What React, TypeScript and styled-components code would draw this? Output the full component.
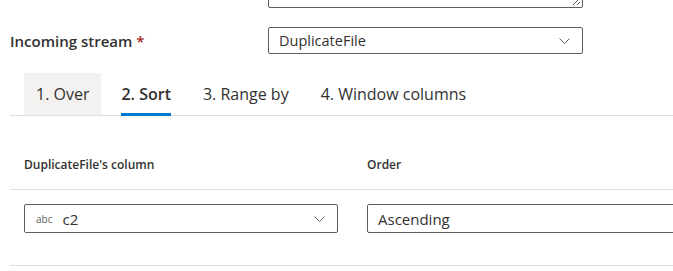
import React from "react";
import styled, { createGlobalStyle } from "styled-components";

const Global = createGlobalStyle`
  html, body { margin: 0; padding: 0; background: #ffffff; }
  body { font-family: "Segoe UI", "Open Sans", sans-serif; color: #323130; }
  * { box-sizing: border-box; }
`;

const Page = styled.div`
  width: 673px;
  height: 271px;
  overflow: hidden;
  padding-left: 10px;
`;

const TopArea = styled.div`
  margin-left: 258px;
  width: 315px;
  height: 40px;
  margin-top: -32px;
  border: 1px solid #605e5c;
  border-radius: 2px;
  position: relative;
`;

const Grip = styled.svg`
  position: absolute;
  right: 1px;
  bottom: 1px;
`;

const FieldRow = styled.div`
  display: flex;
  align-items: center;
  margin-top: 19px;
  height: 27px;
`;

const Label = styled.div`
  width: 258px;
  font-size: 15px;
  font-weight: 600;
  color: #323130;
`;

const Required = styled.span`
  color: #a4262c;
  margin-left: 4px;
`;

const Select = styled.div<{ $w: number }>`
  width: ${(p) => p.$w}px;
  height: 100%;
  border: 1px solid #605e5c;
  border-radius: 2px;
  display: flex;
  align-items: center;
  padding: 0 12px 0 10px;
  font-size: 14.5px;
  color: #323130;
`;

const SelectText = styled.span`
  flex: 1;
`;

const Chevron = () => (
  <svg width="11" height="6" viewBox="0 0 11 6">
    <path d="M0.5 0.5 L5.5 5.5 L10.5 0.5" fill="none" stroke="#605e5c" strokeWidth="1" />
  </svg>
);

const Tabs = styled.div`
  display: flex;
  gap: 8px;
  margin-top: 19px;
  padding-left: 14px;
  border-bottom: 1px solid #e1dfdd;
  height: 43px;
`;

const Tab = styled.div<{ $active?: boolean; $hover?: boolean }>`
  position: relative;
  padding: 0 12px;
  display: flex;
  align-items: center;
  font-size: 16px;
  font-weight: ${(p) => (p.$active ? 600 : 400)};
  background: ${(p) => (p.$hover ? "#f3f2f1" : "transparent")};
  color: #323130;
  &::after {
    content: "";
    display: ${(p) => (p.$active ? "block" : "none")};
    position: absolute;
    left: 12px;
    right: 12px;
    bottom: -1px;
    height: 3px;
    background: #0078d4;
  }
`;

const Grid = styled.div`
  display: grid;
  grid-template-columns: 343px 1fr;
`;

const HeadCell = styled.div`
  height: 74px;
  padding: 40px 0 0 14px;
  font-size: 12px;
  font-weight: 600;
  border-bottom: 1px solid #e1dfdd;
`;

const BodyCell = styled.div<{ $open?: boolean }>`
  height: 76px;
  padding: 14px 0 0 14px;
  border-bottom: 1px solid #e1dfdd;
  display: flex;
  align-items: flex-start;
  ${(p) => (p.$open ? "margin-right: -20px;" : "")}
`;

const Box = styled.div<{ $w?: number }>`
  width: ${(p) => (p.$w ? `${p.$w}px` : "100%")};
  height: 29px;
  border: 1px solid #605e5c;
  border-radius: 2px;
  display: flex;
  align-items: center;
  padding: 0 12px 0 10px;
  font-size: 15px;
`;

const TypeTag = styled.span`
  font-size: 10px;
  color: #605e5c;
  margin: 0 10px 0 1px;
`;

export default function App() {
  return (
    <>
      <Global />
      <Page>
        <TopArea>
          <Grip width="10" height="10" viewBox="0 0 10 10">
            <path d="M2 9 L9 2 M6 9 L9 6" stroke="#605e5c" strokeWidth="1" />
          </Grip>
        </TopArea>
        <FieldRow>
          <Label>
            Incoming stream<Required>*</Required>
          </Label>
          <Select $w={315}>
            <SelectText>DuplicateFile</SelectText>
            <Chevron />
          </Select>
        </FieldRow>
        <Tabs>
          <Tab $hover>1. Over</Tab>
          <Tab $active>2. Sort</Tab>
          <Tab>3. Range by</Tab>
          <Tab>4. Window columns</Tab>
        </Tabs>
        <Grid>
          <HeadCell>DuplicateFile's column</HeadCell>
          <HeadCell>Order</HeadCell>
          <BodyCell>
            <Box $w={314}>
              <TypeTag>abc</TypeTag>
              <SelectText>c2</SelectText>
              <Chevron />
            </Box>
          </BodyCell>
          <BodyCell $open>
            <Box>Ascending</Box>
          </BodyCell>
        </Grid>
      </Page>
    </>
  );
}
